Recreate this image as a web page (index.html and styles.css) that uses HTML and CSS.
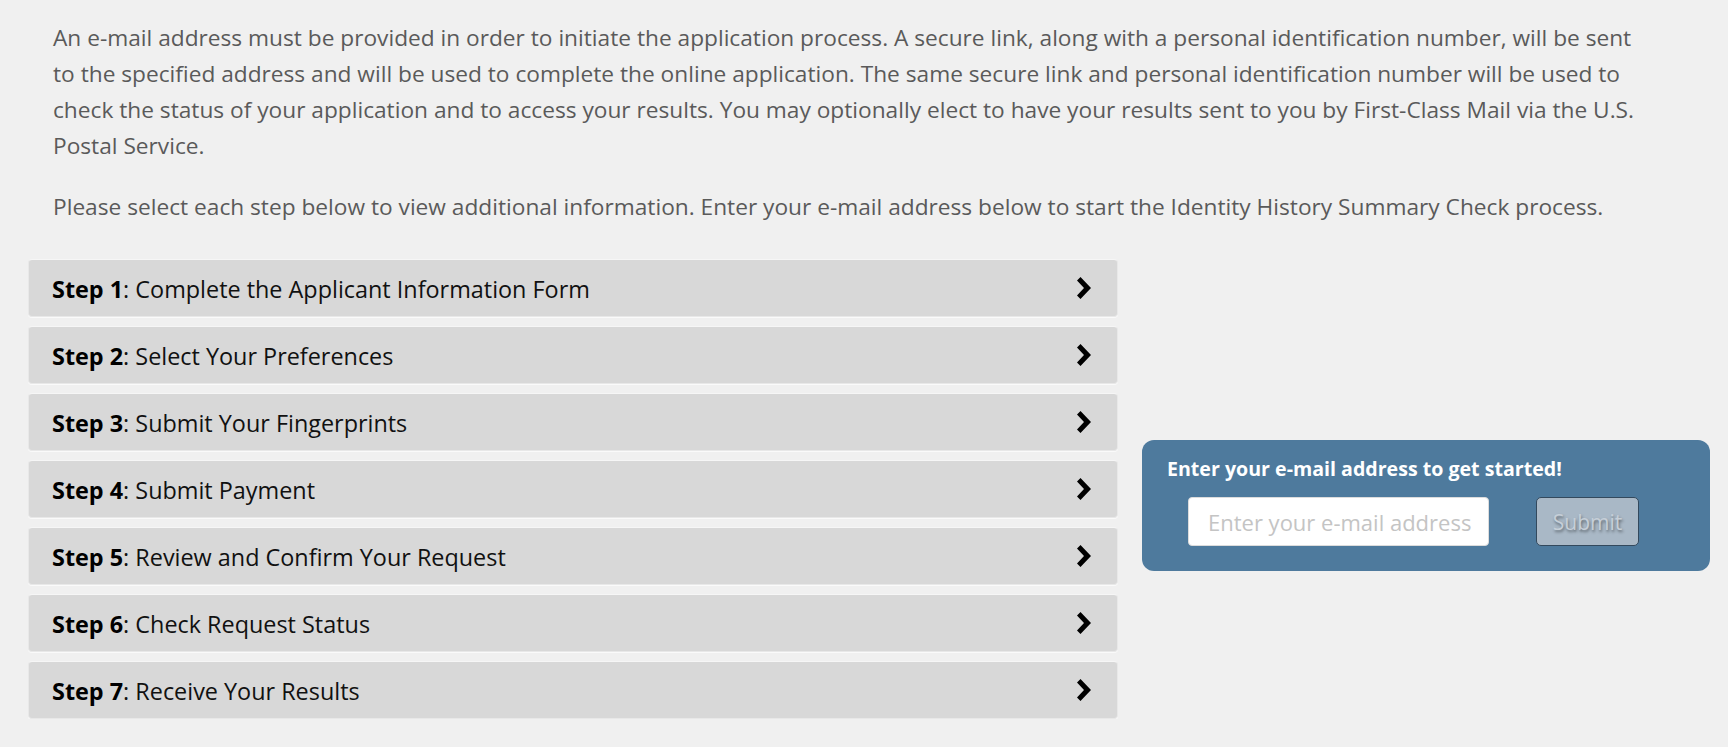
FILE: index.html
```html
<!DOCTYPE html>
<html lang="en">
<head>
  <meta charset="UTF-8" />
  <meta name="viewport" content="width=device-width, initial-scale=1.0"/>
  <title>Identity History Summary Check</title>
  <link rel="stylesheet" href="styles.css">
</head>
<body>
  <main class="page">
    <!-- Intro text -->
    <div class="intro">
      <p>An e-mail address must be provided in order to initiate the application process. A secure link, along with a personal identification number, will be sent to the specified address and will be used to complete the online application. The same secure link and personal identification number will be used to check the status of your application and to access your results. You may optionally elect to have your results sent to you by First-Class Mail via the U.S. Postal Service.</p>
      <p>Please select each step below to view additional information. Enter your e-mail address below to start the Identity History Summary Check process.</p>
    </div>

    <div class="process">
      <!-- Steps -->
      <div class="steps">
        <div class="step"><span><strong>Step 1</strong>: Complete the Applicant Information Form</span>
          <svg class="chevron" viewBox="0 0 14 22"><polygon points="0,3.5 3.5,0 14,11 3.5,22 0,18.5 7,11"/></svg>
        </div>
        <div class="step"><span><strong>Step 2</strong>: Select Your Preferences</span>
          <svg class="chevron" viewBox="0 0 14 22"><polygon points="0,3.5 3.5,0 14,11 3.5,22 0,18.5 7,11"/></svg>
        </div>
        <div class="step"><span><strong>Step 3</strong>: Submit Your Fingerprints</span>
          <svg class="chevron" viewBox="0 0 14 22"><polygon points="0,3.5 3.5,0 14,11 3.5,22 0,18.5 7,11"/></svg>
        </div>
        <div class="step"><span><strong>Step 4</strong>: Submit Payment</span>
          <svg class="chevron" viewBox="0 0 14 22"><polygon points="0,3.5 3.5,0 14,11 3.5,22 0,18.5 7,11"/></svg>
        </div>
        <div class="step"><span><strong>Step 5</strong>: Review and Confirm Your Request</span>
          <svg class="chevron" viewBox="0 0 14 22"><polygon points="0,3.5 3.5,0 14,11 3.5,22 0,18.5 7,11"/></svg>
        </div>
        <div class="step"><span><strong>Step 6</strong>: Check Request Status</span>
          <svg class="chevron" viewBox="0 0 14 22"><polygon points="0,3.5 3.5,0 14,11 3.5,22 0,18.5 7,11"/></svg>
        </div>
        <div class="step"><span><strong>Step 7</strong>: Receive Your Results</span>
          <svg class="chevron" viewBox="0 0 14 22"><polygon points="0,3.5 3.5,0 14,11 3.5,22 0,18.5 7,11"/></svg>
        </div>
      </div>

      <!-- E-mail box -->
      <aside class="signup">
        <h2>Enter your e-mail address to get started!</h2>
        <div class="signup-row">
          <input type="email" placeholder="Enter your e-mail address" />
          <button type="button">Submit</button>
        </div>
      </aside>
    </div>
  </main>
</body>
</html>
```

FILE: styles.css
```css
* { box-sizing: border-box; }
body {
  margin: 0;
  font-family: "Open Sans", "Noto Sans", Arial, sans-serif;
  background: #f0f0f0;
  color: #111;
}

.intro {
  padding: 20px 72px 0 53px;
}

.intro p {
  margin: 0 0 25px;
  font-size: 22.7px;
  line-height: 36px;
  color: #5a5a5a;
}

.process {
  display: flex;
  gap: 24px;
  padding: 9px 18px 0 28px;
}

.steps {
  width: 1090px;
  display: flex;
  flex-direction: column;
  gap: 9px;
}

.step {
  height: 58px;
  display: flex;
  align-items: center;
  justify-content: space-between;
  padding: 2px 26px 0 23px;
  background: #d8d8d8;
  border: 1px solid #e8e8e8;
  border-top-color: #f6f6f6;
  border-radius: 4px;
  box-shadow: 0 1px 0 #fafafa;
  font-size: 23.4px;
  color: #111;
  cursor: pointer;
}

.step strong {
  font-weight: 700;
  color: #000;
}

.chevron {
  width: 14px;
  height: 22px;
  fill: #000;
  margin-top: -2px;
}

.signup {
  width: 568px;
  height: 131px;
  margin-top: 181px;
  padding: 16px 25px 0 25px;
  background: #4e7a9d;
  border-radius: 12px;
}

.signup h2 {
  margin: 0;
  font-size: 19.6px;
  line-height: 26px;
  font-weight: 700;
  color: #fff;
}

.signup-row {
  display: flex;
  gap: 47px;
  margin-top: 15px;
  padding-left: 21px;
}

.signup input {
  width: 301px;
  height: 49px;
  padding: 0 8px 0 19px;
  border: 1px solid #dcdcdc;
  border-radius: 4px;
  background: #fff;
  font-family: inherit;
  font-size: 22px;
  color: #333;
}

.signup input::placeholder {
  color: #c4c4c4;
}

.signup button {
  width: 103px;
  height: 49px;
  padding: 0;
  background: #a9b8c6;
  border: 1px solid #33495d;
  border-radius: 5px;
  font-family: inherit;
  font-size: 21px;
  color: #c6cfd8;
  text-shadow: 1px 2px 3px rgba(0,0,0,0.45);
  cursor: pointer;
}
```
